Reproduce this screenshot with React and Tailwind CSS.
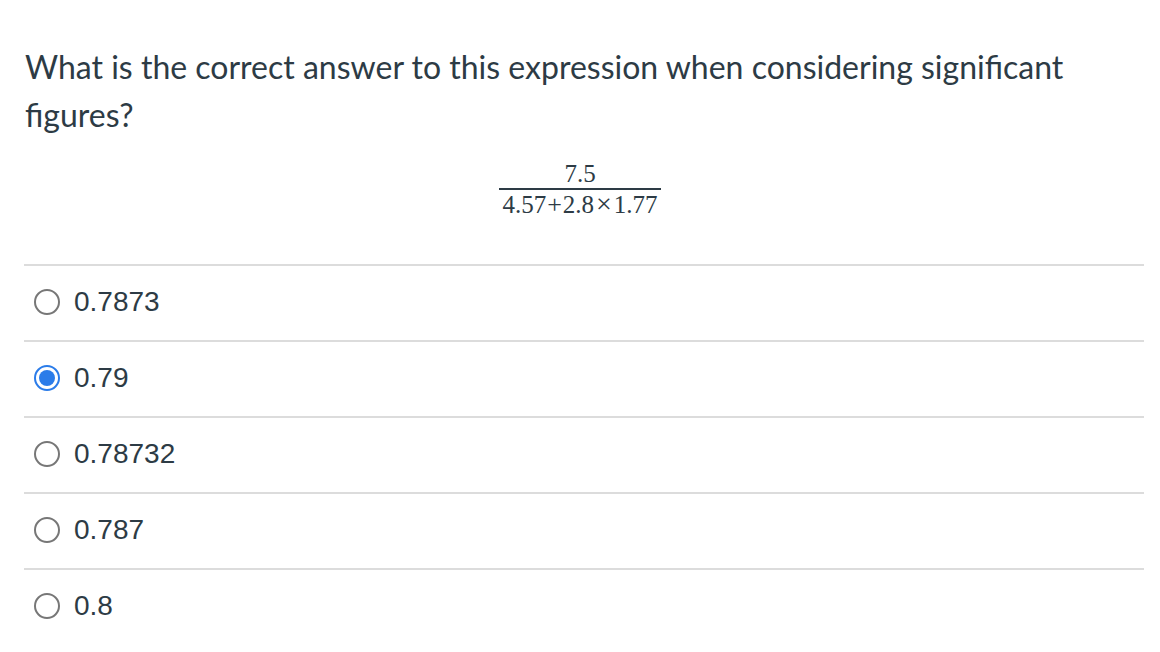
import React from "react";

const answers = [
  { label: "0.7873", checked: false },
  { label: "0.79", checked: true },
  { label: "0.78732", checked: false },
  { label: "0.787", checked: false },
  { label: "0.8", checked: false },
];

function Radio({ checked }) {
  if (checked) {
    return (
      <span className="flex h-[26px] w-[26px] shrink-0 items-center justify-center rounded-full border-2 border-[#2b7ce9] bg-white">
        <span className="h-[16px] w-[16px] rounded-full bg-[#2b7ce9]" />
      </span>
    );
  }
  return (
    <span className="h-[26px] w-[26px] shrink-0 rounded-full border-2 border-[#777777] bg-white" />
  );
}

export default function App() {
  return (
    <div className="min-h-[652px] w-[1160px] bg-white text-[#2d3b45]">
      <div className="pl-[25px] pr-[40px] pt-[43px] font-['Lato','Noto_Sans',sans-serif] text-[32px] leading-[48px] text-[#2d3b45]">
        What is the correct answer to this expression when considering significant figures?
      </div>
      <div className="mt-[22px] flex justify-center font-['Liberation_Serif','Times_New_Roman',serif] text-[25px] leading-none text-[#2d3b45]">
        <div className="flex flex-col items-stretch">
          <div className="px-[3px] pb-[2px] text-center">7.5</div>
          <div className="h-[2px] bg-[#2d3b45]" />
          <div className="px-[3px] pt-[2px] text-center">
            4.57<span className="mx-[1px] text-[26px] leading-[0]">+</span>2.8<span className="mx-[2px] text-[28px] leading-[0]">×</span>1.77
          </div>
        </div>
      </div>
      <div className="ml-[24px] mr-[16px] mt-[47px] font-['Liberation_Sans',Arial,sans-serif] text-[28px] text-[#2d3b45]">
        {answers.map((a) => (
          <div
            key={a.label}
            className="flex h-[76px] items-center gap-[14px] border-t-2 border-[#dcdcdc] pb-[2px] pl-[10px]"
          >
            <Radio checked={a.checked} />
            <span className="leading-none">{a.label}</span>
          </div>
        ))}
      </div>
    </div>
  );
}
